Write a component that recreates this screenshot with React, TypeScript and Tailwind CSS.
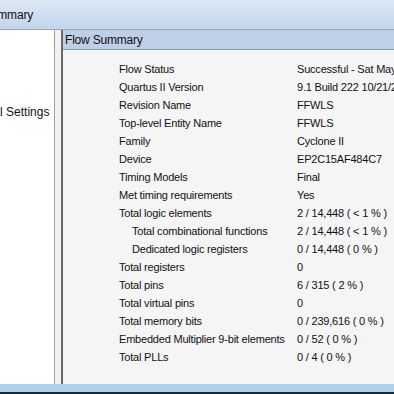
const rows: [string, string, boolean?][] = [
  ["Flow Status", "Successful - Sat May"],
  ["Quartus II Version", "9.1 Build 222 10/21/2009"],
  ["Revision Name", "FFWLS"],
  ["Top-level Entity Name", "FFWLS"],
  ["Family", "Cyclone II"],
  ["Device", "EP2C15AF484C7"],
  ["Timing Models", "Final"],
  ["Met timing requirements", "Yes"],
  ["Total logic elements", "2 / 14,448 ( < 1 % )"],
  ["Total combinational functions", "2 / 14,448 ( < 1 % )", true],
  ["Dedicated logic registers", "0 / 14,448 ( 0 % )", true],
  ["Total registers", "0"],
  ["Total pins", "6 / 315 ( 2 % )"],
  ["Total virtual pins", "0"],
  ["Total memory bits", "0 / 239,616 ( 0 % )"],
  ["Embedded Multiplier 9-bit elements", "0 / 52 ( 0 % )"],
  ["Total PLLs", "0 / 4 ( 0 % )"],
];

const tree = [
  "Flow Summary",
  "Flow Settings",
  "Flow Non-Default Global Settings",
  "Flow Elapsed Time",
  "Flow OS Summary",
  "Flow Log",
];

export default function App() {
  return (
    <div
      className="w-[394px] h-[394px] overflow-hidden flex flex-col bg-[#f0f0f0] text-[11px] tracking-[-0.2px] text-[#111]"
      style={{ fontFamily: '"Liberation Sans", Arial, sans-serif' }}
    >
      {/* window title strip */}
      <div className="h-[30px] shrink-0 bg-gradient-to-b from-[#dde8f5] to-[#c3d6ed] border-b border-[#9aa7b5] flex items-end pb-[5px] whitespace-nowrap text-[12px]">
        <div className="w-[33px] flex justify-end">
          <span>Flow Summary</span>
        </div>
      </div>

      <div className="flex flex-1 min-h-0">
        {/* left tree, mostly scrolled off to the left */}
        <div className="w-[55px] shrink-0 bg-white border-r border-[#a0a0a0] overflow-hidden whitespace-nowrap text-[12px]">
          <div className="ml-[-128px] pt-[37px] tracking-normal">
            {tree.map((t) => (
              <div key={t} className="h-[18px] flex items-center">{t}</div>
            ))}
          </div>
        </div>
        <div className="w-[6px] shrink-0 bg-[#f2f2f2]" />

        {/* right report */}
        <div className="flex-1 flex flex-col border-l-2 border-[#6a6a6a] bg-[#f5f5f5] min-w-0">
          <div className="h-[20px] shrink-0 bg-[#bdd0e8] border-b border-[#8e9aa8] pl-[2px] flex items-center whitespace-nowrap text-[12px]">
            Flow Summary
          </div>
          <div className="flex-1 pt-[10px] pl-[56px] whitespace-nowrap overflow-hidden">
            {rows.map(([k, v, sub]) => (
              <div key={k} className="flex h-[18px] items-center">
                <div className={`w-[178px] shrink-0 ${sub ? "pl-[13px]" : ""}`}>{k}</div>
                <div>{v}</div>
              </div>
            ))}
          </div>
        </div>
      </div>

      {/* taskbar */}
      <div className="h-[10px] shrink-0 flex flex-col">
        <div className="h-[8px] bg-[#a9d3f0]" />
        <div className="flex-1 bg-[#1d2a35]" />
      </div>
    </div>
  );
}
